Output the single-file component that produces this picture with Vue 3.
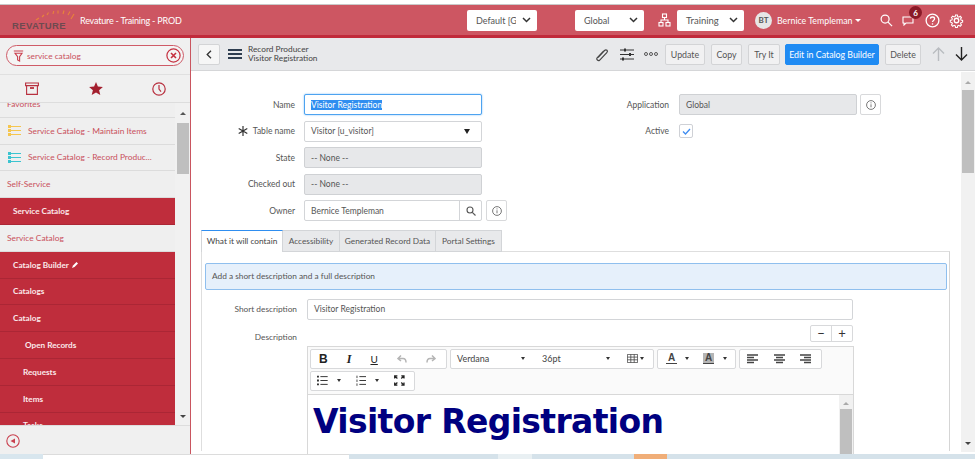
<script setup>
const favorites = [
  { label: 'Service Catalog - Maintain Items', color: '#f5c64f' },
  { label: 'Service Catalog - Record Produc...', color: '#3cc4d0' },
]
const toolbarButtons = [
  { label: 'Update', cls: 'b-update' },
  { label: 'Copy', cls: 'b-copy' },
  { label: 'Try It', cls: 'b-try' },
]
const redRows = [
  { label: 'Catalog', cls: '' },
  { label: 'Open Records', cls: 'lvl3 open' },
  { label: 'Requests', cls: 'lvl3' },
  { label: 'Items', cls: 'lvl3' },
  { label: 'Tasks', cls: 'lvl3' },
]
const tabs = ['What it will contain', 'Accessibility', 'Generated Record Data', 'Portal Settings']
</script>

<template>
  <div class="page">
    <div class="top-strip"></div>
    <header class="header">
      <div class="logo">
        <svg class="logo-rays" width="40" height="12" viewBox="0 0 40 12">
          <g stroke="#e8833a" stroke-width="1.100" fill="none">
            <path d="M1 10l3-2M7 7l2-2M12 5l1.500-2.500M18 4l.7-3M23 3.500V.5M28 4l1-3.500M33 5l2-3.500M36 9l3-5" />
          </g>
        </svg>
        <span class="logo-text">REVATURE</span>
      </div>
      <div class="instance">Revature - Training - PROD</div>
      <div class="sel sel-default"><span class="sel-clip">Default [Global]</span><svg width="9" height="6" viewBox="0 0 9 6"><path d="M1 1l3.5 3.5L8 1" fill="none" stroke="#333" stroke-width="1.5" /></svg></div>
      <div class="sel sel-global"><span>Global</span><svg width="9" height="6" viewBox="0 0 9 6"><path d="M1 1l3.5 3.5L8 1" fill="none" stroke="#333" stroke-width="1.5" /></svg></div>
      <svg class="org" width="13" height="14" viewBox="0 0 13 14" fill="none" stroke="#fff" stroke-width="1.1">
        <rect x="4.5" y="1" width="4" height="3.5" /><rect x="1" y="9.5" width="4" height="3.5" /><rect x="8" y="9.5" width="4" height="3.5" />
        <path d="M6.5 4.5V7M3 9.5V7h7v2.5" />
      </svg>
      <div class="sel sel-training"><span>Training</span><svg width="9" height="6" viewBox="0 0 9 6"><path d="M1 1l3.5 3.5L8 1" fill="none" stroke="#333" stroke-width="1.5" /></svg></div>
      <div class="avatar">BT</div>
      <div class="user">Bernice Templeman</div>
      <span class="user-caret"></span>
      <svg class="h-search" width="13" height="13" viewBox="0 0 14 14" fill="none" stroke="#fff" stroke-width="1.3"><circle cx="5.5" cy="5.5" r="4.3" /><path d="M8.7 8.7L13 13" /></svg>
      <div class="chat">
        <svg width="12" height="12" viewBox="0 0 12 12" fill="none" stroke="#fff" stroke-width="1.1"><path d="M1 3h10v6H4l-2 2V9H1z" /></svg>
        <span class="badge">6</span>
      </div>
      <svg class="h-help" width="15" height="15" viewBox="0 0 16 16" fill="none" stroke="#fff" stroke-width="1.4">
        <circle cx="8" cy="8" r="6.8" /><path d="M5.8 6.2C5.8 3.6 10.2 3.6 10.2 6.2 10.2 7.9 8 7.9 8 9.6" /><path d="M8 11v1.4" />
      </svg>
      <svg class="h-gear" width="15" height="15" viewBox="0 0 16 16" fill="none" stroke="#fff" stroke-width="1.4">
        <circle cx="8" cy="8" r="2.4" />
        <path d="M6.8 1h2.4l.4 2 1.5.7 1.8-1.1 1.6 1.7-1.1 1.7.6 1.5 2 .4v2.3l-2 .4-.6 1.5 1.1 1.7-1.6 1.7-1.8-1.1-1.5.7-.4 2H6.8l-.4-2-1.5-.7-1.8 1.1-1.6-1.7 1.1-1.7-.6-1.5-2-.4V7.7l2-.4.6-1.5-1.1-1.7 1.6-1.7 1.8 1.1 1.5-.7z" transform="translate(1.4 1.4) scale(.82)" />
      </svg>
    </header>

    <div class="body">
      <aside class="nav">
        <div class="nav-search">
          <div class="filter">
            <svg width="11" height="12" viewBox="0 0 11 12" fill="none" stroke="#c9404f" stroke-width="1.1"><path d="M.8 1h9.4M2 3.2h7L6.6 6.6V11l-2-1V6.6z" /></svg>
            <span class="filter-text">service catalog</span>
            <svg class="filter-x" width="15" height="15" viewBox="0 0 15 15" fill="none" stroke="#c5303f"><circle cx="7.5" cy="7.5" r="6.6" stroke-width="1.2" /><path d="M5 5l5 5M10 5l-5 5" stroke-width="1.6" /></svg>
          </div>
        </div>
        <div class="nav-tabs">
          <svg width="14" height="13" viewBox="0 0 14 13" fill="none" stroke="#b8303f" stroke-width="1.1"><path d="M.6 1h12.8v2.6H.6zM1.6 3.6v8.8h10.8V3.6" /><path d="M5 6h4" stroke-width="1.8" /></svg>
          <svg width="14" height="13" viewBox="0 0 14 13"><path d="M7 0l1.9 4.6 5 .4-3.8 3.2 1.2 4.8L7 10.4 2.700 13l1.200-4.800L.1 5l5-.4z" fill="#a31f2e" /></svg>
          <svg width="14" height="14" viewBox="0 0 14 14" fill="none" stroke="#b8303f" stroke-width="1.2"><circle cx="7" cy="7" r="6.2" /><path d="M7 3v4l2 2.600" /></svg>
        </div>
        <div class="nav-scroll">
          <div class="nav-list">
            <div class="nav-inner">
              <div class="row row-light">Favorites</div>
              <div v-for="f in favorites" :key="f.label" class="row row-light row-fav">
                <svg width="13" height="11" viewBox="0 0 13 11" :fill="f.color"><rect x="0" y="0" width="3" height="3" /><rect x="0" y="4" width="3" height="3" /><rect x="0" y="8" width="3" height="3" /><rect x="3" y="1" width="10" height="1" /><rect x="3" y="5" width="10" height="1" /><rect x="3" y="9" width="10" height="1" /></svg>
                <span>{{ f.label }}</span>
              </div>
              <div class="row row-light">Self-Service</div>
              <div class="row row-red">Service Catalog</div>
              <div class="row row-light">Service Catalog</div>
              <div class="row row-red">Catalog Builder <svg class="pencil" width="6" height="6" viewBox="0 0 6 6"><path d="M0 6l1-2.500L4.500 0 6 1.500 2.500 5z" fill="#fff" /></svg></div>
              <div class="row row-red">Catalogs</div>
              <div v-for="r in redRows" :key="r.label" class="row row-red" :class="r.cls">{{ r.label }}</div>
            </div>
          </div>
          <div class="vbar nav-bar">
            <span class="up"></span>
            <span class="thumb"></span>
            <span class="down"></span>
          </div>
        </div>
        <div class="nav-foot">
          <svg width="14" height="14" viewBox="0 0 14 14"><circle cx="7" cy="7" r="6.200" fill="none" stroke="#c9404f" stroke-width="1.100" /><path d="M9 4.500v5L4.500 7z" fill="#c9404f" /></svg>
        </div>
      </aside>

      <main class="main">
        <div class="toolbar">
          <button class="tbtn back"><svg width="6" height="9" viewBox="0 0 6 9"><path d="M5 .8L1.200 4.500 5 8.200" fill="none" stroke="#333" stroke-width="1.300" /></svg></button>
          <div class="burger"><i></i><i></i><i></i></div>
          <div class="crumb"><div>Record Producer</div><div>Visitor Registration</div></div>
          <svg class="clip" width="15" height="15" viewBox="0 0 15 15" fill="none" stroke="#444" stroke-width="1.200"><path d="M4 10.500l6.500-7c1.800-1.800 4 .4 2.300 2.200l-7.300 7.600c-1.200 1.100-3.700-1-2.400-2.500l6.400-6.700" /></svg>
          <svg class="sliders" width="14" height="13" viewBox="0 0 14 13" stroke="#333"><path d="M0 2h14M0 6.500h14M0 11h14" stroke-width="1" /><path d="M5 .5v3M10 5v3M3 9.500v3" stroke-width="2" /></svg>
          <div class="dots"><i></i><i></i><i></i></div>
          <button v-for="b in toolbarButtons" :key="b.label" class="tbtn" :class="b.cls">{{ b.label }}</button>
          <button class="tbtn primary">Edit in Catalog Builder</button>
          <button class="tbtn b-delete">Delete</button>
          <svg class="arrow" width="13" height="14" viewBox="0 0 13 14" fill="none" stroke="#b9bcc0" stroke-width="1.400"><path d="M6.500 14V1M1 6.500L6.500 1 12 6.500" /></svg>
          <svg class="arrow arrow-dn" width="13" height="14" viewBox="0 0 13 14" fill="none" stroke="#222" stroke-width="1.400"><path d="M6.500 0v13M1 7.500L6.500 13 12 7.500" /></svg>
        </div>

        <div class="content">
          <div class="form">
            <div class="fields">
              <div class="col-left">
                <div class="frow">
                  <label>Name</label>
                  <div class="inp focus"><span class="selected">Visitor Registration</span></div>
                </div>
                <div class="frow">
                  <label><svg class="req" width="10" height="10" viewBox="0 0 10 10" stroke="#333" stroke-width="1.200"><path d="M5 0v10M.7 2.500l8.600 5M9.300 2.500l-8.600 5" /></svg>Table name</label>
                  <div class="inp between"><span>Visitor [u_visitor]</span><span class="tri"></span></div>
                </div>
                <div class="frow">
                  <label>State</label>
                  <div class="inp ro">-- None --</div>
                </div>
                <div class="frow">
                  <label>Checked out</label>
                  <div class="inp ro">-- None --</div>
                </div>
                <div class="frow">
                  <label>Owner</label>
                  <div class="inp owner"><span>Bernice Templeman</span>
                    <span class="lookup"><svg width="10" height="10" viewBox="0 0 10 10" fill="none" stroke="#555" stroke-width="1.100"><circle cx="4" cy="4" r="3" /><path d="M6.300 6.300L9.500 9.500" /></svg></span>
                  </div>
                  <span class="info"><svg width="10" height="10" viewBox="0 0 10 10" fill="none" stroke="#555" stroke-width=".8"><circle cx="5" cy="5" r="4.400" /><path d="M5 4.300v3M5 2.400v1" /></svg></span>
                </div>
              </div>
              <div class="col-right">
                <div class="frow">
                  <label>Application</label>
                  <div class="inp ro">Global</div>
                  <span class="info"><svg width="10" height="10" viewBox="0 0 10 10" fill="none" stroke="#555" stroke-width=".8"><circle cx="5" cy="5" r="4.400" /><path d="M5 4.300v3M5 2.400v1" /></svg></span>
                </div>
                <div class="frow">
                  <label>Active</label>
                  <span class="check"><svg width="9" height="7" viewBox="0 0 9 7"><path d="M1 3.500l2.500 2.500L8 1" fill="none" stroke="#3f8cf0" stroke-width="1.300" /></svg></span>
                </div>
              </div>
            </div>

            <div class="tabs">
              <div v-for="(t, i) in tabs" :key="t" class="tab" :class="{ active: i === 0 }">{{ t }}</div>
            </div>
            <div class="panel">
              <div class="notice">Add a short description and a full description</div>
              <div class="short">
                <label>Short description</label>
                <div class="inp">Visitor Registration</div>
              </div>
              <div class="desc-head">
                <label>Description</label>
                <div class="stepper"><span>−</span><span>+</span></div>
              </div>
              <div class="editor">
                <div class="ed-tools">
                  <div class="grp g1">
                    <b class="ic bold">B</b><i class="ic ital">I</i><u class="ic und">U</u>
                    <svg class="ic" width="10" height="8" viewBox="0 0 10 8" fill="none" stroke="#b5b5b5" stroke-width="1.500"><path d="M4 .5L1 3.500 4 6M1.500 3.500H6c2.500 0 3 2 3 4" /></svg>
                    <svg class="ic" width="10" height="8" viewBox="0 0 10 8" fill="none" stroke="#b5b5b5" stroke-width="1.500"><path d="M6 .5L9 3.500 6 6M8.500 3.500H4c-2.500 0-3 2-3 4" /></svg>
                  </div>
                  <div class="grp g2">
                    <span class="dd dd-font">Verdana<em></em></span>
                    <span class="dd dd-size">36pt<em></em></span>
                    <svg width="11" height="9" viewBox="0 0 11 9" fill="none" stroke="#444" stroke-width=".8"><path d="M.4.400h10.200v8.200H.4zM.4 3.100h10.200M.4 5.800h10.200M3.800.400v8.200M7.200.400v8.200" /></svg><em class="caret"></em>
                  </div>
                  <div class="grp g3">
                    <span class="color">A</span><em class="caret"></em>
                    <span class="color shade">A</span><em class="caret"></em>
                  </div>
                  <div class="grp g4">
                    <svg v-for="a in ['M0 1h11M0 3.500h7M0 6h11M0 8.500h7', 'M0 1h11M2 3.500h7M0 6h11M2 8.500h7', 'M0 1h11M4 3.500h7M0 6h11M4 8.500h7']" :key="a" width="11" height="10" viewBox="0 0 11 10" stroke="#444" stroke-width="1.300"><path :d="a" /></svg>
                  </div>
                  <div class="grp g5">
                    <svg width="11" height="11" viewBox="0 0 11 11" stroke="#333"><path d="M3.500 1.500H11M3.500 5.500H11M3.500 9.500H11" /><path d="M0 1.500h2M0 5.500h2M0 9.500h2" stroke-width="2" /></svg><em class="caret"></em>
                    <svg width="11" height="11" viewBox="0 0 11 11" stroke="#333"><path d="M3.500 1.500H11M3.500 5.500H11M3.500 9.500H11" /><path d="M1 .5v2.500M1 4.500v2.500M1 8.500v2.500" stroke-width=".9" /></svg><em class="caret"></em>
                    <svg width="11" height="11" viewBox="0 0 11 11" fill="none" stroke="#222" stroke-width="1.300"><path d="M.7 3.500V.7h2.800M7.500.7h2.800v2.800M10.300 7.500v2.800H7.500M3.500 10.300H.7V7.500M1 1l2.500 2.500M10 1L7.500 3.500M10 10L7.500 7.500M1 10l2.500-2.500" /></svg>
                  </div>
                </div>
                <div class="ed-body">
                  <div class="ed-text">Visitor Registration</div>
                  <div class="vbar ed-bar"><span class="up"></span><span class="thumb"></span></div>
                </div>
              </div>
            </div>
          </div>
          <div class="vbar page-bar">
            <span class="up"></span>
            <span class="thumb"></span>
            <span class="down"></span>
          </div>
        </div>
      </main>
    </div>

    <div class="taskbar">
      <span class="tb a"></span><span class="tb w"></span><span class="tb b"></span><span class="tb c"></span><span class="tb b2"></span><span class="tb o"></span><span class="tb b3"></span>
    </div>
  </div>
</template>

<style>
html, body { margin: 0; background: #fff; }
</style>

<style scoped>
.page {
  width: 975px;
  height: 459px;
  overflow: hidden;
  display: flex;
  flex-direction: column;
  font-family: "Lato", "Open Sans", sans-serif;
  font-size: 9px;
  color: #555;
}
.top-strip { height: 4px; background: #fff; border-bottom: 1px solid #c9c9c9; }

.header {
  height: 33px;
  box-sizing: border-box;
  background: #cd5662;
  border-bottom: 3px solid #c12a3b;
  display: flex;
  align-items: center;
  color: #fff;
  flex: none;
}
.logo { width: 67px; margin-left: 11px; height: 24px; position: relative; }
.logo-rays { position: absolute; left: 24px; top: 2px; }
.logo-text { position: absolute; left: 1px; top: 12px; font: 700 9.500px "Liberation Sans", sans-serif; letter-spacing: .4px; color: #6e4a50; }
.instance { margin-left: 2px; width: 387px; font-size: 9px; letter-spacing: -.2px; white-space: nowrap; }
.sel {
  box-sizing: border-box;
  height: 21px;
  background: #fff;
  border-radius: 2px;
  color: #555;
  display: flex;
  align-items: center;
  justify-content: space-between;
  padding: 0 6px 0 9px;
}
.sel span { white-space: nowrap; }
.sel-default { width: 70px; }
.sel-clip { overflow: hidden; width: 40px; }
.sel-global { width: 69px; margin-left: 38px; }
.org { margin-left: 14px; }
.sel-training { width: 67px; margin-left: 6px; font-size: 9.500px; }
.avatar {
  width: 17px; height: 17px; border-radius: 50%;
  background: #e6e6e6; color: #555; margin-left: 11px;
  display: flex; align-items: center; justify-content: center; font-size: 8px; font-weight: 700;
}
.user { margin-left: 5px; width: 72px; font-size: 8.800px; white-space: nowrap; }
.user-caret { margin-left: 6px; border: 3px solid transparent; border-top-color: #fff; border-bottom: 0; }
.h-search { margin-left: 19px; }
.chat { margin-left: 9px; width: 12px; height: 12px; position: relative; display: flex; }
.badge {
  position: absolute; left: 7px; top: -8px; width: 13px; height: 13px; border-radius: 50%;
  background: #8a1a27; color: #fff; font-size: 8px; font-weight: 700;
  display: flex; align-items: center; justify-content: center;
}
.h-help { margin-left: 11px; }
.h-gear { margin-left: 9px; }

.body { flex: 1; display: flex; min-height: 0; }

.nav {
  width: 191px;
  flex: none;
  box-sizing: border-box;
  background: #f0f0f0;
  border-right: 1px solid #c9555f;
  display: flex;
  flex-direction: column;
}
.nav-search { height: 37px; flex: none; box-sizing: border-box; padding: 7px 6px 0; border-bottom: 1px solid #e0e0e0; }
.filter {
  height: 21px; box-sizing: border-box; border: 1px solid #cf5b67; border-radius: 11px; background: #f4f4f4;
  display: flex; align-items: center; padding: 0 2px 0 6px;
}
.filter-text { margin-left: 3px; color: #c9505c; font-size: 8.300px; flex: 1; }
.nav-tabs {
  height: 28px; flex: none; box-sizing: border-box; border-bottom: 1px solid #ddd;
  display: grid; grid-template-columns: 64px 63px 63px; justify-items: center; align-items: center;
}
.nav-scroll { flex: 1; display: flex; min-height: 0; }
.nav-list { width: 175px; overflow: hidden; flex: none; }
.nav-inner { margin-top: -12px; }
.row {
  height: 26.800px; box-sizing: border-box; display: flex; align-items: center;
  padding-left: 7px; font-size: 8.200px; font-weight: 700; white-space: nowrap;
}
.row-light { background: #efefef; color: #c9505c; border-bottom: 1px solid #dcdcdc; font-weight: 400; font-size: 8.400px; }
.row-fav svg { margin: 0 7px 0 1px; flex: none; }
.row-red { background: #bf2d3c; color: #fbe9eb; padding-left: 13px; border-bottom: 1px solid #ab2635; }
.pencil { margin-left: 3px; }
.lvl3 { padding-left: 23px; }
.open { padding-left: 25px; }
.vbar { background: #f1f1f1; display: flex; flex-direction: column; align-items: center; flex: none; position: relative; }
.vbar .thumb { background: #bfbfbf; width: 100%; display: block; }
.vbar .up { border: 3px solid transparent; border-bottom: 3px solid #555; border-top: 0; margin: 9px 0 8px; }
.vbar .down { border: 3px solid transparent; border-top: 3px solid #444; border-bottom: 0; margin: auto 0 7px; }
.nav-bar { width: 15px; }
.nav-bar .thumb { width: 12px; height: 51px; }
.nav-foot { height: 29px; flex: none; box-sizing: border-box; border-top: 1px solid #ddd; padding: 8px 0 0 6px; }

.main { flex: 1; min-width: 0; display: flex; flex-direction: column; }
.toolbar {
  height: 33px; flex: none; box-sizing: border-box;
  background: #e8e9eb; border-bottom: 1px solid #d5d6d8;
  display: flex; align-items: center; padding-left: 7px;
}
.tbtn {
  height: 21px; box-sizing: border-box; padding: 0; margin-left: 6px;
  border: 1px solid #d3d4d6; border-radius: 2px; background: #f1f1f2;
  font: 400 8.800px "Lato", sans-serif; color: #555; white-space: nowrap; flex: none;
}
.back { width: 22px; margin-left: 0; display: flex; align-items: center; justify-content: center; background: #f6f6f6; padding: 0; }
.b-update { width: 40px; }
.b-copy { width: 31px; }
.b-try { width: 32px; }
.b-delete { width: 36px; }
.burger { margin-left: 8px; width: 14px; display: flex; flex-direction: column; gap: 2.500px; }
.burger i { display: block; height: 1.500px; background: #2e3d4f; }
.crumb { margin-left: 6px; width: 346px; font-size: 8.300px; line-height: 9px; color: #444; }
.clip { margin-left: 0; }
.sliders { margin-left: 11px; }
.dots { margin-left: 10px; display: flex; gap: 1px; margin-right: 1px; }
.dots i { width: 4px; height: 4px; box-sizing: border-box; border: 1px solid #555; border-radius: 50%; }
.primary { background: #1f8bf3; border-color: #1f8bf3; color: #fff; margin-left: 5px; width: 94px; }
.arrow { margin-left: 11px; }
.arrow-dn { margin-left: 10px; }

.content { flex: 1; display: flex; min-height: 0; margin-top: 1px; }
.form { flex: 1; min-width: 0; padding: 22px 0 0 10px; height: 360px; overflow: hidden; }
.fields { display: flex; }
.col-left { width: 368px; }
.col-right { width: 383px; }
.frow { display: flex; align-items: center; height: 21px; margin-bottom: 5.600px; }
.frow label {
  width: 94px; text-align: right; margin-right: 9px; flex: none; font-size: 8.500px;
  display: flex; justify-content: flex-end; align-items: center;
}
.req { margin-right: 5px; }
.col-right .frow label { width: 100px; margin-right: 10px; }
.inp {
  width: 178px; height: 21px; box-sizing: border-box;
  border: 1px solid #d3d5d8; border-radius: 2px; background: #fff;
  display: flex; align-items: center; padding: 0 6px; font-size: 8.500px; color: #555; flex: none;
}
.focus { border-color: #4da3f0; box-shadow: 0 0 2px #7dbcf5; }
.selected { background: #2f8ef0; color: #fff; }
.between { justify-content: space-between; }
.tri { border: 3.500px solid transparent; border-top: 5px solid #222; border-bottom: 0; margin-right: 5px; }
.ro { background: #e7e8ea; border-color: #cfd1d4; }
.owner { width: 178px; padding-right: 0; justify-content: space-between; }
.lookup { width: 21px; height: 19px; border-left: 1px solid #d3d5d8; display: flex; align-items: center; justify-content: center; }
.info {
  width: 21px; height: 21px; box-sizing: border-box; margin-left: 4px; flex: none;
  border: 1px solid #d8d9db; border-radius: 2px; background: #fff;
  display: flex; align-items: center; justify-content: center;
}
.col-right .info { margin-left: 3px; }
.check {
  width: 14px; height: 14px; box-sizing: border-box; border: 1px solid #cfd1d6; border-radius: 2px;
  display: flex; align-items: center; justify-content: center;
}

.tabs { display: flex; margin-top: 3px; height: 22px; }
.tab {
  box-sizing: border-box; height: 22px; display: flex; align-items: center; justify-content: center;
  background: #e8e9eb; border: 1px solid #d3d5d8; border-left: 0; font-size: 8.300px; white-space: nowrap;
}
.tab:nth-child(1) { width: 82px; }
.tab:nth-child(2) { width: 57px; }
.tab:nth-child(3) { width: 96px; }
.tab:nth-child(4) { width: 66px; }
.tab.active { background: #fff; border-top: 1px solid #2f8ef0; border-left: 1px solid #d3d5d8; border-bottom: 0; color: #444; }
.panel {
  width: 749px; box-sizing: border-box; height: 200px;
  border-left: 1px solid #dedede; border-right: 1px solid #d5d5d5; border-top: 1px solid #dedede; margin-top: -1px;
  padding: 11px 2px 0 3px;
}
.notice {
  height: 27px; box-sizing: border-box; background: #e6f0fb; border: 1px solid #8fbfee; border-radius: 2px;
  display: flex; align-items: center; padding-left: 6px; font-size: 8.300px;
}
.short { display: flex; align-items: center; margin-top: 9px; height: 21px; }
.short label, .desc-head label { width: 92px; margin-right: 10px; text-align: right; flex: none; font-size: 8.300px; }
.short .inp { width: 546px; padding-left: 6px; }
.desc-head { display: flex; align-items: flex-start; height: 21px; margin-top: 5px; }
.desc-head label { margin-top: 7px; }
.stepper {
  margin-left: 503px; width: 43px; height: 17px; box-sizing: border-box; display: flex;
  border: 1px solid #d8d9db; border-radius: 2px;
}
.stepper span { flex: 1; display: flex; align-items: center; justify-content: center; font-size: 13px; line-height: 1; color: #333; }
.stepper span:first-child { border-right: 1px solid #d8d9db; }
.editor {
  margin-left: 102px; width: 547px; height: 110px; box-sizing: border-box;
  border: 1px solid #d8d8d8; border-bottom: 0; background: #fafafa;
}
.ed-tools {
  display: flex; flex-wrap: wrap; gap: 2px 3px; padding: 2px 0 2px 2px; height: 48px; box-sizing: border-box;
  border-bottom: 1px solid #d8d8d8; align-content: flex-start;
}
.grp {
  height: 20px; box-sizing: border-box; display: flex; align-items: center;
  background: #fff; border: 1px solid #d8d9db; border-radius: 2px; flex: none; color: #444;
}
.g1 { width: 137px; justify-content: space-between; padding: 0 10px 0 8px; }
.g2 { width: 204px; padding-left: 6px; }
.g3 { width: 79px; padding-left: 8px; }
.g4 { width: 83px; justify-content: space-between; padding: 0 10px 0 7px; }
.g5 { width: 105px; padding-left: 6px; }
.ic { font-style: normal; text-decoration: none; color: #222; font-size: 12px; line-height: 1; }
.bold { font-family: "Liberation Sans", sans-serif; font-weight: 700; }
.ital { font-family: "Liberation Serif", serif; font-style: italic; font-weight: 700; }
.und { text-decoration: underline; font-size: 10px; }
.dd { display: flex; align-items: center; font-size: 9px; }
.dd em, .caret { border: 2.500px solid transparent; border-top: 3px solid #333; border-bottom: 0; display: block; flex: none; }
.dd-font { width: 85px; justify-content: space-between; padding-right: 17px; box-sizing: border-box; }
.dd-size { width: 85px; justify-content: space-between; padding-right: 17px; box-sizing: border-box; }
.caret { margin: 0 0 0 2px; }
.color { font: 700 10px "Liberation Sans", sans-serif; border-bottom: 1px solid #444; width: 11px; text-align: center; line-height: 10px; margin-right: 8px; }
.shade { background: #b5b5b5; margin-left: 14px; margin-right: 9px; }
.g3 .caret { margin: 0; }
.g5 svg { margin-right: 9px; }
.g5 .caret { margin: 0 15px 0 0; }
.ed-body { display: flex; background: #fff; height: 62px; }
.ed-text {
  flex: 1; padding: 10px 0 0 5px; font: 700 33px/33px "DejaVu Sans", "Liberation Sans", sans-serif;
  color: #000080; white-space: nowrap; overflow: hidden; letter-spacing: -.65px;
}
.ed-bar { width: 14px; }
.ed-bar .up { border-bottom-color: #aaa; margin: 7px 0 4px; }
.ed-bar .thumb { width: 12px; height: 50px; }
.page-bar { width: 14px; margin-left: auto; height: 380px; align-items: flex-start; }
.page-bar .thumb { height: 83px; width: 12px; margin-left: 1px; }
.page-bar .up { border-bottom-color: #aaa; margin: 9px 0 6px 4px; }
.page-bar .down { margin-left: 4px; }

.taskbar { height: 5px; flex: none; display: flex; margin-top: 0; border-top: 0; }
.tb { display: block; height: 100%; }
.a { width: 43px; background: #d8e6ee; }
.w { width: 306px; background: #fff; border-top: 1px solid #dcdcdc; box-sizing: border-box; }
.b { width: 149px; background: #d5e2ea; }
.c { width: 34px; background: #e9f0f3; }
.b2 { width: 102px; background: #d5e2ea; }
.o { width: 33px; background: #f0ae78; }
.b3 { flex: 1; background: #d5e2ea; }
</style>
